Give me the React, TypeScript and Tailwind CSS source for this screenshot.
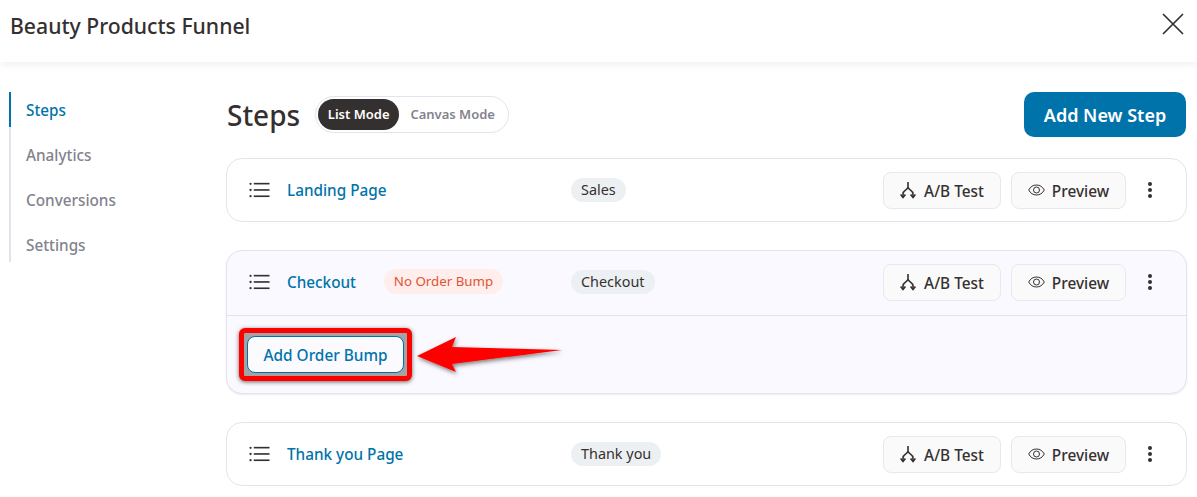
import React from "react";

const ListIcon = () => (
  <svg width="21" height="16" viewBox="0 0 22 16" className="mb-[1px] shrink-0">
    <g fill="#353030">
      <circle cx="1.6" cy="1.5" r="1.2" />
      <circle cx="1.6" cy="8" r="1.2" />
      <circle cx="1.6" cy="14.5" r="1.2" />
      <rect x="5" y="0.5" width="16.5" height="1.7" />
      <rect x="5" y="7.1" width="16.5" height="1.7" />
      <rect x="5" y="13.7" width="16.5" height="1.7" />
    </g>
  </svg>
);

const ABIcon = () => (
  <svg width="16" height="18" viewBox="0 0 16 18" fill="none" stroke="#353030" strokeWidth="1.6" className="shrink-0">
    <path d="M8 1v5C8 9 3 9 3 13v3M8 6c0 3 5 3 5 7v3" />
    <path d="M0.6 13.4L3 16.4l2.4-3M10.6 13.4l2.4 3 2.4-3" />
  </svg>
);

const EyeIcon = () => (
  <svg width="17" height="12" viewBox="0 0 17 12" fill="none" stroke="#353030" strokeWidth="1" className="shrink-0">
    <path d="M0.7 6C2.5 2.6 5.2 1 8.5 1s6 1.6 7.8 5c-1.8 3.4-4.5 5-7.8 5S2.5 9.4.7 6z" />
    <circle cx="8.5" cy="6" r="3" />
  </svg>
);

const Dots = () => (
  <div className="flex w-[4px] flex-col gap-[2px]">
    <span className="h-[4px] w-[4px] rounded-full bg-[#353030]" />
    <span className="h-[4px] w-[4px] rounded-full bg-[#353030]" />
    <span className="h-[4px] w-[4px] rounded-full bg-[#353030]" />
  </div>
);

function RowActions() {
  return (
    <div className="ml-auto flex items-center">
      <div className="flex h-[37px] w-[118px] items-center justify-center gap-[8px] rounded-[8px] border border-[#e8e8ef] bg-[#fafafa] text-[15.4px] font-medium text-[#353030]">
        <ABIcon />
        <span className="pt-[4px]">A/B Test</span>
      </div>
      <div className="ml-[10px] flex h-[37px] w-[115px] items-center justify-center gap-[7px] rounded-[8px] border border-[#e8e8ef] bg-[#fafafa] text-[15.4px] font-medium text-[#353030]">
        <EyeIcon />
        <span className="pt-[4px]">Preview</span>
      </div>
      <div className="ml-[22px] mr-[34px] flex items-center">
        <Dots />
      </div>
    </div>
  );
}

function Row({ title, tag, bump }: { title: string; tag: string; bump?: boolean }) {
  return (
    <div className="flex h-[62px] items-center pl-[22px]">
      <ListIcon />
      <span className="ml-[17px] w-[97px] shrink-0 whitespace-nowrap text-[15.3px] font-medium text-[#0073aa]">{title}</span>
      {bump ? (
        <span className="mb-[1px] flex h-[25px] w-[119px] shrink-0 items-center justify-center rounded-full bg-[#ffeeeb] text-[13.3px] text-[#e15334]">
          No Order Bump
        </span>
      ) : (
        <span className="w-[119px] shrink-0" />
      )}
      <span className="ml-[68px] mb-[1px] flex h-[24px] items-center rounded-full bg-[#edf0f2] px-[10px] text-[14.4px] text-[#353030]">{tag}</span>
      <RowActions />
    </div>
  );
}

export default function App() {
  return (
    <div className="h-[497px] w-[1197px] overflow-hidden bg-white font-['Noto_Sans','Open_Sans',sans-serif]">
      <header className="flex h-[62px] items-center justify-between bg-white pl-[10px] pr-[13px] shadow-[0_2px_8px_rgba(0,0,0,0.07)]">
        <h1 className="mb-[11px] text-[21.2px] font-medium text-[#353030]">Beauty Products Funnel</h1>
        <svg width="22" height="22" viewBox="0 0 22 22" fill="none" stroke="#353030" strokeWidth="1.7" className="mb-[14px]">
          <path d="M1 1l20 20M21 1L1 21" />
        </svg>
      </header>
      <div className="flex pl-[9px] pr-[10px] pt-[30px]">
        <nav className="h-[170px] w-[217px] shrink-0 border-l-2 border-[#e3e3ee] text-[15.3px] font-medium text-[#82838e]">
          <div className="-ml-[2px] flex h-[35px] items-center border-l-2 border-[#0073aa] pl-[15px] pt-[2px] text-[#0073aa]">Steps</div>
          <div className="mt-[11px] flex h-[34px] items-center pl-[15px]">Analytics</div>
          <div className="mt-[11px] flex h-[34px] items-center pl-[15px]">Conversions</div>
          <div className="mt-[11px] flex h-[34px] items-center pl-[15px]">Settings</div>
        </nav>
        <main className="min-w-0 flex-1">
          <div className="flex h-[45px] items-center pl-[1px]">
            <h2 className="text-[28px] font-medium leading-none text-[#353030]">Steps</h2>
            <div className="ml-[15px] flex h-[37px] items-center rounded-full border border-[#e3e3ee] p-[2px] text-[13px] font-semibold">
              <span className="flex h-[31px] w-[81px] items-center justify-center rounded-full bg-[#353030] pt-[1px] text-white">List Mode</span>
              <span className="flex h-[31px] w-[107px] items-center justify-center pt-[1px] text-[#82838e]">Canvas Mode</span>
            </div>
            <button className="ml-auto mr-px flex h-[45px] w-[162px] items-center justify-center rounded-[10px] bg-[#0073aa] pt-[1px] text-[18px] font-semibold text-white">
              Add New Step
            </button>
          </div>
          <div className="mt-[21px] rounded-[16px] border border-[#e3e3ee] bg-white">
            <Row title="Landing Page" tag="Sales" />
          </div>
          <div className="mt-[28px] rounded-[16px] border border-[#e3e3ee] bg-[#f9f9ff] shadow-[0_1px_2px_rgba(0,0,0,0.08)]">
            <div className="pb-[2px]">
              <Row title="Checkout" tag="Checkout" bump />
            </div>
            <div className="flex h-[78px] items-center border-t border-[#e3e3ee] pb-[1px] pl-[12px]">
              <div className="rounded-[6px] border-[5px] border-[#fe0000] bg-[#a3a3a3] p-[3px] shadow-[0_1px_4px_rgba(0,0,0,0.6)]">
                <button className="flex h-[37px] w-[157px] items-center justify-center rounded-[8px] border border-[#0073aa] bg-[#fafaff] pt-[4px] text-[15.4px] font-medium text-[#0073aa]">
                  Add Order Bump
                </button>
              </div>
              <svg width="146" height="42" viewBox="0 0 146 42" className="ml-[5px] mt-[4px] overflow-visible">
                <defs>
                  <filter id="s" x="-10%" y="-30%" width="120%" height="170%">
                    <feDropShadow dx="1" dy="2" stdDeviation="2" floodColor="#000" floodOpacity="0.5" />
                  </filter>
                </defs>
                <path d="M0 21L39 2L35 12L145 15L35 29L39 37Z" fill="#fe0000" filter="url(#s)" />
              </svg>
            </div>
          </div>
          <div className="mt-[28px] rounded-[16px] border border-[#e3e3ee] bg-white">
            <Row title="Thank you Page" tag="Thank you" />
          </div>
        </main>
      </div>
    </div>
  );
}
